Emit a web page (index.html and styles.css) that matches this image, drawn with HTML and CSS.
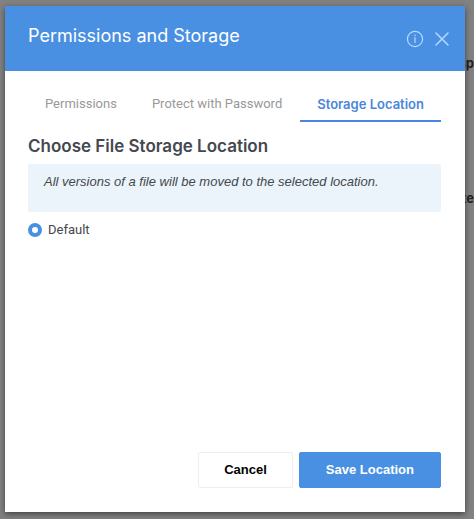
FILE: index.html
```html
<!DOCTYPE html>
<html lang="en">
<head>
<meta charset="utf-8">
<meta name="viewport" content="width=device-width, initial-scale=1">
<title>Permissions and Storage</title>
<link rel="stylesheet" href="styles.css">
</head>
<body>
<div class="backdrop">
  <span class="page-text page-text-top">sp</span>
  <span class="page-text page-text-mid">te</span>
  <section class="dialog" role="dialog" aria-labelledby="dialog-title">
    <header class="dialog-header">
      <h1 class="dialog-title" id="dialog-title">Permissions and Storage</h1>
      <button class="icon-button" type="button" aria-label="Information">
        <svg width="18" height="18" viewBox="0 0 18 18" fill="none" stroke="currentColor" stroke-width="1.2" stroke-linecap="round"><circle cx="9" cy="9" r="7.6"/><path d="M9 7.6v4.8"/><circle cx="9" cy="5.3" r=".8" fill="currentColor" stroke="none"/></svg>
      </button>
      <button class="icon-button" type="button" aria-label="Close">
        <svg width="18" height="18" viewBox="0 0 18 18" fill="none" stroke="currentColor" stroke-width="1.5" stroke-linecap="round"><path d="M3 3l12 12M15 3L3 15"/></svg>
      </button>
    </header>
    <nav class="tabs">
      <a class="tab" href="#permissions">Permissions</a>
      <a class="tab" href="#password">Protect with Password</a>
      <a class="tab tab-active" href="#storage" aria-current="page">Storage Location</a>
    </nav>
    <main class="content">
      <h2 class="section-title">Choose File Storage Location</h2>
      <p class="notice">All versions of a file will be moved to the selected location.</p>
      <label class="option" for="location-default">
        <input class="radio" type="radio" id="location-default" name="location" checked>
        Default
      </label>
    </main>
    <footer class="actions">
      <button class="button" type="button">Cancel</button>
      <button class="button button-primary" type="button">Save Location</button>
    </footer>
  </section>
</div>
</body>
</html>
```

FILE: styles.css
```css
* {
  box-sizing: border-box;
}

body {
  margin: 0;
  font-family: Roboto, "Liberation Sans", sans-serif;
  font-size: 13px;
  line-height: 20px;
  color: #45484e;
}

.backdrop {
  position: relative;
  display: flex;
  min-height: 100vh;
  padding: 6px 9px 7px 5px;
  background: #828282;
  overflow: hidden;
}

.page-text {
  position: absolute;
  right: 0;
  font-family: Inter, sans-serif;
  font-weight: 700;
  color: #222;
}

.page-text-top {
  top: 53px;
}

.page-text-mid {
  top: 188px;
}

.dialog {
  position: relative;
  flex: 1;
  display: flex;
  flex-direction: column;
  min-width: 0;
  background: #fff;
  box-shadow: 0 2px 6px rgba(0, 0, 0, 0.5);
}

.dialog-header {
  display: flex;
  align-items: center;
  gap: 9px;
  height: 65px;
  padding: 0 14px 0 23px;
  background: #4990e2;
  color: #fff;
}

.dialog-title {
  flex: 1;
  margin: 0 0 6px;
  font-family: Inter, sans-serif;
  font-size: 18px;
  line-height: 24px;
  font-weight: 400;
}

.icon-button {
  display: flex;
  padding: 0;
  border: 0;
  background: none;
  color: #b5daff;
}

.tabs {
  display: flex;
  justify-content: space-between;
  padding: 18px 24px 0 23px;
}

.tab {
  padding: 5px 17px 6px;
  border-bottom: 2px solid transparent;
  color: #999;
  text-decoration: none;
  white-space: nowrap;
}

.tab-active {
  border-color: #4a86dc;
  color: #4a86dc;
  font-family: Inter, sans-serif;
  font-weight: 600;
}

.content {
  flex: 1;
  padding: 12px 24px 0 23px;
}

.section-title {
  margin: 0 0 6px;
  font-family: Inter, sans-serif;
  font-size: 17px;
  line-height: 24px;
  font-weight: 600;
}

.notice {
  min-height: 48px;
  margin: 0 0 8px;
  padding: 8px 16px;
  border-radius: 2px;
  background: #ebf4fb;
  font-family: "Liberation Sans", sans-serif;
  font-style: italic;
}

.option {
  display: flex;
  align-items: center;
  gap: 6px;
}

.radio {
  appearance: none;
  width: 14px;
  height: 14px;
  margin: 0;
  border: 4px solid #4990e2;
  border-radius: 50%;
  background: #fff;
}

.actions {
  display: flex;
  justify-content: flex-end;
  gap: 6px;
  padding: 0 24px 24px;
}

.button {
  height: 36px;
  padding: 0 25px;
  border: 1px solid #eee;
  border-radius: 2px;
  background: #fff;
  color: #000;
  font: 700 13px/20px "Liberation Sans", sans-serif;
}

.button-primary {
  padding: 0 26px;
  border-color: #4990e2;
  background: #4990e2;
  color: #fff;
}
```
